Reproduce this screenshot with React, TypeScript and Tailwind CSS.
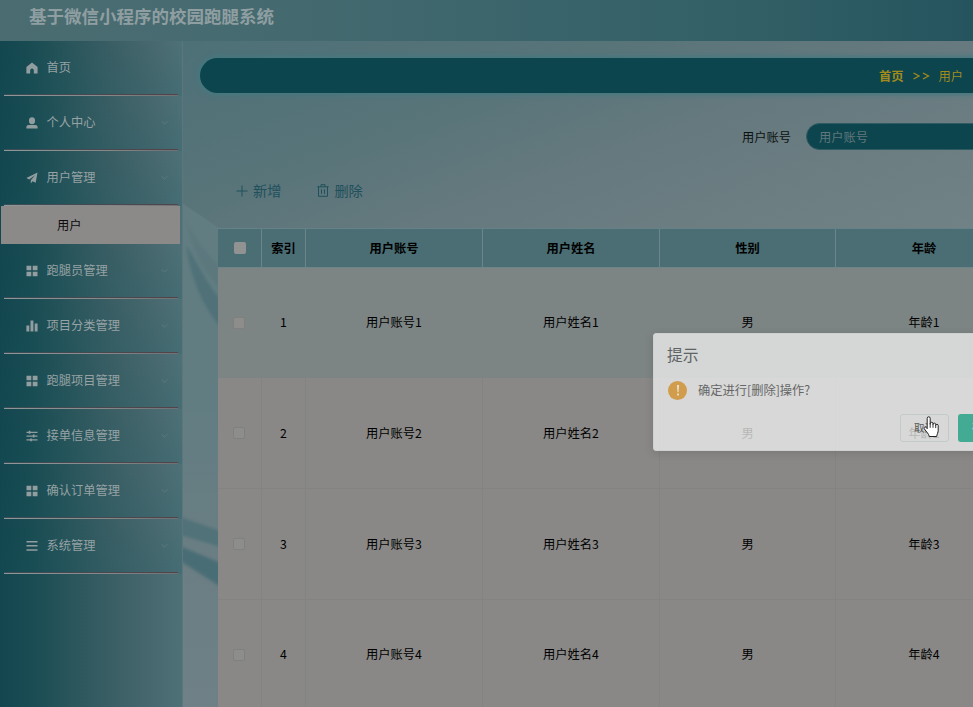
import type { ReactNode } from 'react';

type IconName = 'home' | 'user' | 'plane' | 'grid' | 'chart' | 'sliders' | 'list';

interface MenuItem { icon: IconName; label: string; child?: string; leaf?: boolean }

const MENU: MenuItem[] = [
  { icon: 'home', label: '首页', leaf: true },
  { icon: 'user', label: '个人中心' },
  { icon: 'plane', label: '用户管理', child: '用户' },
  { icon: 'grid', label: '跑腿员管理' },
  { icon: 'chart', label: '项目分类管理' },
  { icon: 'grid', label: '跑腿项目管理' },
  { icon: 'sliders', label: '接单信息管理' },
  { icon: 'grid', label: '确认订单管理' },
  { icon: 'list', label: '系统管理' },
];

const HEADERS = ['用户账号', '用户姓名', '性别', '年龄'];
const ROWS = [1, 2, 3, 4].map((n) => ({ n, cells: [`用户账号${n}`, `用户姓名${n}`, '男', `年龄${n}`] }));

const ICONS: Record<IconName, ReactNode> = {
  home: <path d="M6 .4 11.600 5v6.400H7.800V8.200a1.800 1.800 0 0 0-3.600 0v3.200H.4V5z" />,
  user: <path d="M6 .2a3 3 0 0 1 3 3v1a3 3 0 0 1-6 0v-1a3 3 0 0 1 3-3zM.4 11.600V10c0-1.400.9-2.100 2.400-2.100h6.400c1.500 0 2.400.700 2.400 2.100v1.600z" />,
  plane: <path d="M11.500.5.300 6l2.900 1.600 5.800-4.400-4.200 5v3.300l1.800-2.200 3.100 1.400z" />,
  grid: <path d="M.5.8h4.800v4.500H.5zM6.700.8h4.800v4.500H6.700zM.5 6.700h4.800v4.500H.5zM6.700 6.700h4.800v4.500H6.700z" />,
  chart: <path d="M.4 5.600h2.900v5.900H.4zM4.500.6h2.900v10.900H4.500zM8.700 3.600h2.900v7.900H8.700z" />,
  sliders: (
    <path d="M.5 1.700h2.200V.8h1.700v.9h7.100v1.200H4.400v.8H2.700v-.8H.5zM.5 5.500h6.300v-.9h1.700v.9h3v1.200h-3v.8H6.800v-.8H.5zM.5 9.300h3.700v-.9h1.700v.9h5.600v1.200H5.900v.8H4.200v-.8H.5z" />
  ),
  list: <path d="M.5 1h11v1.500H.5zM.5 5.100h11v1.500H.5zM.5 9.200h11v1.500H.5z" />,
};

function Icon({ name }: { name: IconName }) {
  return (
    <svg viewBox="0 0 12 12" className="h-3 w-3 shrink-0 fill-[#929da0]">{ICONS[name]}</svg>
  );
}

function Waves() {
  return (
    <svg className="absolute inset-0 h-full w-full" viewBox="0 0 790 666" preserveAspectRatio="none">
      <defs>
        <filter id="soft"><feGaussianBlur stdDeviation="1.5" /></filter>
        <linearGradient id="strip" x1="0" y1="0" x2="0" y2="1">
          <stop offset="0" stopColor="#617d82" />
          <stop offset=".35" stopColor="#617d82" />
          <stop offset=".7" stopColor="#6a7e83" />
          <stop offset="1" stopColor="#6f8186" />
        </linearGradient>
      </defs>
      <path d="M-4 160 36 187V680H-4z" fill="url(#strip)" />
      <g filter="url(#soft)">
        <path d="M2 178C12 196 22 212 36 224V246C22 234 10 210 2 178z" fill="#587479" opacity=".6" />
        <path d="M3 204C14 220 22 240 37 258V286C20 264 8 240 3 204z" fill="#4a6e75" opacity=".75" />
        <path d="M-3 476 38 490V506L-3 494z" fill="#4e7077" opacity=".85" />
        <path d="M-3 505 38 522V546L-3 520z" fill="#476c74" opacity=".9" />
      </g>
    </svg>
  );
}

function Sidebar() {
  return (
    <aside className="w-[183px] shrink-0 border-r border-[#5c777b] bg-[linear-gradient(90deg,#13464f_0%,#184b52_15%,#27545a_36%,#395e64_60%,#48696f_86%,#4e7177_100%)]">
      {MENU.map((item) => (
        <div key={item.label}>
          <div className="flex h-[55px] flex-col bg-[linear-gradient(180deg,rgba(15,80,92,0)_0%,rgba(15,85,95,0.14)_100%)]">
            <div className="flex flex-1 items-center pr-3 pl-[26px] text-[#96a2a4]">
              <Icon name={item.icon} />
              <span className="ml-[8.5px] text-[12.25px]">{item.label}</span>
              {!item.leaf && (
                <svg viewBox="0 0 8 5" className="mr-[2px] ml-auto h-[4px] w-[7px] fill-none stroke-[#5f7d82]">
                  <path d="m.5.5 3.500 3.500L7.500.5" />
                </svg>
              )}
            </div>
            <div className="mr-1 ml-1 h-px bg-[linear-gradient(90deg,#3a4d56,#54434a)]" />
            <div className="mr-1 ml-1 h-px bg-[linear-gradient(90deg,#8e9799,#858788_60%,#6d7173)]" />
          </div>
          {item.child && (
            <div className="mr-[2px] ml-[1px] flex h-[38px] items-center bg-[#8c8a89] pl-[56px] text-[12.25px] text-[#0b0b0b]">
              {item.child}
            </div>
          )}
        </div>
      ))}
    </aside>
  );
}

function Checkbox({ head }: { head?: boolean }) {
  return <span className={head ? 'h-3 w-3 rounded-[2px] bg-[#919392]' : 'mr-[2px] h-3 w-3 rounded-[2px] border border-[#7f807f] bg-[#8d8d8b]'} />;
}

const GRID = 'grid grid-cols-[44px_44px_177px_177px_176px_177px]';

function UserTable() {
  const head = 'flex items-center justify-center border-r border-[#6b868a] pt-px';
  return (
    <div className="mt-6 ml-[35px] w-[795px] text-[12.25px] text-black">
      <div className={`${GRID} h-[39.700px] border-t border-b border-t-[#648287] border-b-[#6c8588] bg-[#4b6e74] font-bold`}>
        <div className={head}><Checkbox head /></div>
        <div className={head}>索引</div>
        {HEADERS.map((h) => <div key={h} className={head}>{h}</div>)}
      </div>
      {ROWS.map((row) => {
        const line = row.n === 1 ? 'border-[#7d8484]' : 'border-[#838381]';
        const cell = `flex items-center justify-center border-r border-b ${line}`;
        return (
          <div key={row.n} className={`${GRID} h-[110.7px] ${row.n === 1 ? 'bg-[#7d8484]' : 'bg-[#898886]'}`}>
            <div className={cell}><Checkbox /></div>
            <div className={cell}>{row.n}</div>
            {row.cells.map((c) => <div key={c} className={cell}>{c}</div>)}
          </div>
        );
      })}
    </div>
  );
}

function ConfirmDialog() {
  return (
    <div className="absolute top-[333px] left-[653px] flex h-[118px] w-[367px] flex-col rounded-[3px] border border-[#cdd1d0] bg-[rgba(242,243,241,0.75)] pr-3 pl-[13px] text-[#666] shadow-[0_2px_10px_rgba(0,0,0,0.12)]">
      <div className="mt-[10px] text-[15.75px] leading-[21px] text-[#606363]">提示</div>
      <div className="mt-[15px] flex h-[20px] items-center">
        <span className="ml-px flex h-[19px] w-[19px] items-center justify-center rounded-full bg-[#d19c4c]">
          <svg viewBox="0 0 4 12" className="h-[11px] w-[4px] fill-[#e9dfcd]">
            <path d="M.8 0h2.400l-.600 8h-1.200zM1 9.400h2v2.100H1z" />
          </svg>
        </span>
        <span className="ml-[11px] text-[12.25px]">确定进行[删除]操作?</span>
      </div>
      <div className="mt-[14px] flex justify-end gap-[9px] text-[10.5px]">
        <button className="h-[28px] w-[49px] rounded-[3px] border border-[#c3cbc8] text-[#555]">取消</button>
        <button className="h-[28px] w-[49px] rounded-[3px] bg-[#43ab94] text-[#d8e8e3]">确定</button>
      </div>
    </div>
  );
}

function HandCursor() {
  return (
    <svg viewBox="0 0 17 22" className="absolute top-[416px] left-[923px] h-[22px] w-[17px]">
      <path
        d="M4.200 2.300a1.500 1.500 0 0 1 3 0v6.200-1a1.400 1.400 0 0 1 2.800.3v1-.5a1.300 1.300 0 0 1 2.700.4v1-.3a1.200 1.200 0 0 1 2.500.3v4.500c0 2.500-1.200 3.600-1.500 6.300H6.300C5.900 18 3.700 16.200 1.300 12.800c-.9-1.300.8-2.500 1.900-1.300l1 1.200z"
        fill="#fff" stroke="#222" strokeWidth="1" strokeLinejoin="round"
      />
      <path d="M7.200 8.500v3.300M10 8.800v3M12.700 9.600v2.500" stroke="#222" strokeWidth=".9" fill="none" />
    </svg>
  );
}

export default function App() {
  return (
    <div className="relative flex h-[707px] w-[973px] flex-col overflow-hidden font-['Noto_Sans_CJK_SC',sans-serif] leading-normal">
      <header className="h-[41px] shrink-0 bg-[linear-gradient(90deg,#4b6d72_0%,#446a6f_30%,#38636a_60%,#315e65_80%,#25545f_100%)] pl-[29px]">
        <h1 className="text-[17.5px] leading-[31px] font-bold text-[#8f9ea1]">基于微信小程序的校园跑腿系统</h1>
      </header>
      <div className="flex h-[666px]">
        <Sidebar />
        <main className="relative w-[790px] shrink-0 overflow-hidden bg-[linear-gradient(160deg,#4d7077_0%,#577479_16%,#65797e_28%,#6e7f83_42%,#74868a_60%,#74858a_100%)]">
          <Waves />
          <div className="relative w-[860px]">
            <div className="mt-[17.4px] ml-[17px] flex h-[35px] items-center rounded-l-full bg-[#0c454e] pl-[679px] text-[12.25px] text-[#a38b1b] shadow-[0_0_5px_2px_#447980]">
              <span className="font-bold">首页</span>
              <svg viewBox="0 0 18 8" className="mx-2 h-2 w-[18px] fill-none stroke-[#a38b1b] stroke-[1.3]">
                <path d="m1.500 1 5.500 3-5.500 3M11 1l5.500 3L11 7" />
              </svg>
              <span className="ml-px">用户</span>
            </div>
            <div className="mt-[30px] ml-[559px] flex h-[27px] items-center text-[12.25px]">
              <label className="text-[#0c1112]">用户账号</label>
              <div className="ml-[15px] flex h-[27px] flex-1 items-center rounded-l-full border border-[#315b62] bg-[#0c454e] pl-3 text-[#61777b]">用户账号</div>
            </div>
            <div className="mt-[27.6px] ml-[53px] flex h-[26px] items-center text-[14.2px] text-[#20505b]">
              <svg viewBox="0 0 12 12" className="h-3 w-3 fill-none stroke-[#20505b]"><path d="M6 .5v11M.5 6h11" /></svg>
              <span className="ml-[5px]">新增</span>
              <svg viewBox="0 0 12 13" className="ml-9 h-[13px] w-3 fill-none stroke-[#20505b]">
                <path d="M.3 2.800h11.400M1.500 2.800v9.500h9V2.800M4 2.500V.700h4v1.800M4.500 5.300v4.500M7.500 5.300v4.500" />
              </svg>
              <span className="ml-[5px]">删除</span>
            </div>
            <UserTable />
          </div>
        </main>
      </div>
      <ConfirmDialog />
      <HandCursor />
    </div>
  );
}
